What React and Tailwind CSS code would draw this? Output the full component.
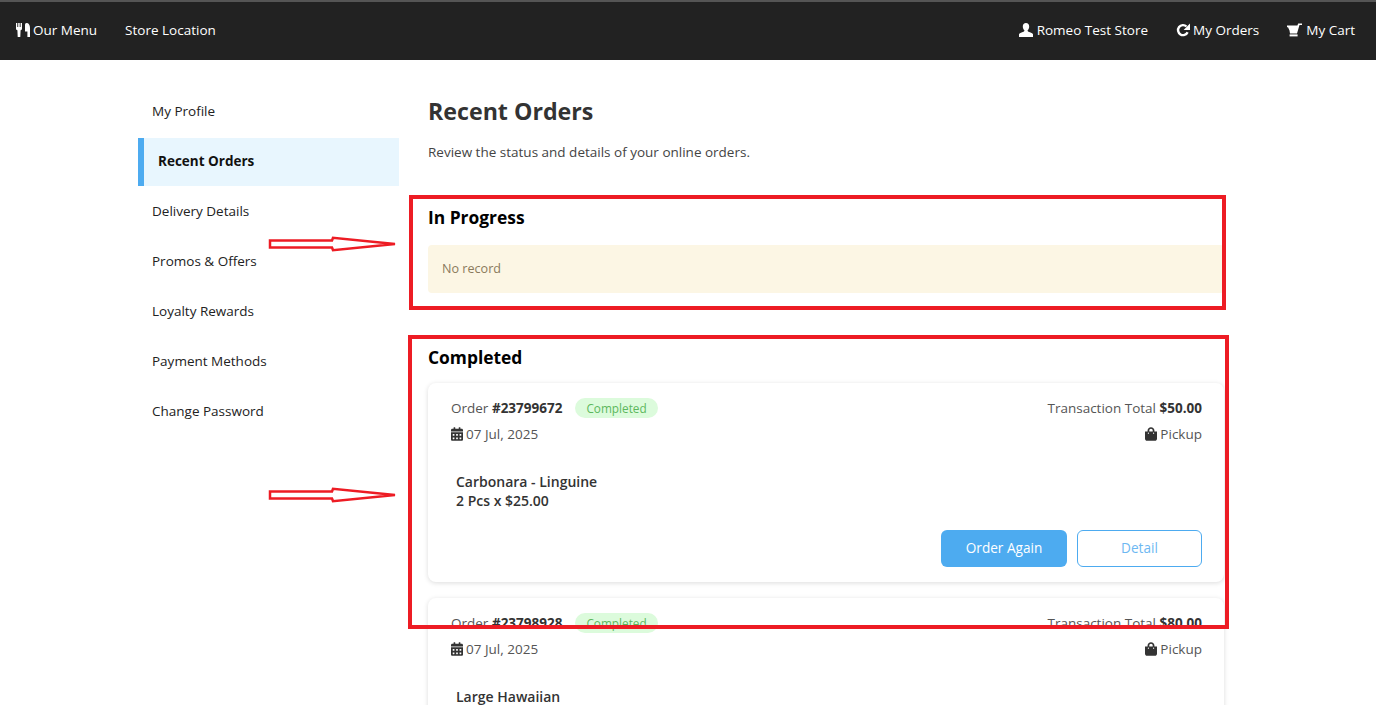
import { FaCalendarAlt, FaShoppingBag } from 'react-icons/fa';

const sideItems = ['My Profile', 'Recent Orders', 'Delivery Details', 'Promos & Offers', 'Loyalty Rewards', 'Payment Methods', 'Change Password'];

function Cutlery() {
  return (
    <svg viewBox="0 0 14 14" className="w-[14px] h-[14px] fill-white" aria-hidden="true">
      <path d="M0 0h1.300v4h.9V0h1.500v4h.9V0H6v5.500c0 1-.6 1.600-1.400 1.800L4.300 14H1.700L1.400 7.300C.6 7.100 0 6.500 0 5.500z" />
      <path d="M10.500 0C12.800 0 14 2 14 5v9h-2.600V8.500H9V2c0-1.300.5-2 1.500-2z" />
    </svg>
  );
}

function User() {
  return (
    <svg viewBox="0 0 14 14" className="w-[14px] h-[14px] fill-white" aria-hidden="true">
      <path d="M7 0c2 0 3.200 1.400 3.200 3.400 0 1.600-.7 3.200-1.700 4 .2.800.7 1.100 1.700 1.500 1.800.7 3.300 1.300 3.800 2.300V14H0v-2.800c.5-1 2-1.600 3.800-2.300 1-.4 1.500-.7 1.700-1.500-1-.8-1.700-2.400-1.700-4C3.800 1.400 5 0 7 0z" />
    </svg>
  );
}

function Refresh() {
  return (
    <svg viewBox="0 0 14 14" className="w-[14px] h-[14px] fill-none" aria-hidden="true">
      <path d="M11.600 9.200A5 5 0 1 1 10.500 3.500" stroke="white" strokeWidth="2.400" />
      <path d="M14 .6v6.400H7.600z" fill="white" />
    </svg>
  );
}

function Cart() {
  return (
    <svg viewBox="0 0 15 14" className="w-[15px] h-[14px] fill-white" aria-hidden="true">
      <path d="M0 2.400h10.400L11.200.4H15v1.700h-2.500L10 10.600H3L2.500 7.500 1 4.300H0z" />
      <rect x="2.600" y="11.400" width="8" height="2" />
    </svg>
  );
}

function Arrow({ className }) {
  return (
    <svg viewBox="0 0 130 16" className={`absolute w-[130px] h-[16px] ${className}`} aria-hidden="true">
      <path d="M2 4.500H64L65 1.800 127 8 65 14.200 64 11.500H2z" fill="white" stroke="#ed1c24" strokeWidth="2.500" />
    </svg>
  );
}

function OrderCard({ number, total, item, qty, withActions }) {
  return (
    <div className="rounded-lg bg-white pt-[14px] pb-[15px] pl-[23px] pr-[22px] shadow-[0_1px_5px_rgba(0,0,0,0.14)]">
      <div className="flex justify-between items-start text-[13.5px]">
        <div>
          <div className="flex items-center h-[22px]">
            <span className="text-[#555]">Order <b className="text-[#333]">#{number}</b></span>
            <span className="ml-[13px] rounded-full bg-[#dcfbdc] px-[11px] h-[20px] leading-[20px] text-[11.800px] text-[#5cb85c]">Completed</span>
          </div>
          <div className="flex items-center mt-[4px] h-[22px] text-[#555]">
            <FaCalendarAlt className="w-[12px] h-[14px] text-[#333] mr-[3px]" />
            07 Jul, 2025
          </div>
        </div>
        <div className="text-right text-[#555]">
          <div className="h-[22px] leading-[22px]">Transaction Total <b className="text-[#333]">${total}</b></div>
          <div className="flex items-center justify-end mt-[4px] h-[22px]">
            <FaShoppingBag className="w-[12px] h-[14px] text-[#333] mr-[3px]" />
            Pickup
          </div>
        </div>
      </div>
      <div className="mt-[27px] ml-[5px] font-semibold text-[#333] leading-[19px]">
        <div>{item}</div>
        <div>{qty}</div>
      </div>
      {withActions && (
        <div className="flex justify-end gap-[10px] mt-[20px] text-[13.6px]">
          <button className="w-[126px] h-[37px] rounded-md bg-[#4dabf0] text-white">Order Again</button>
          <button className="w-[125px] h-[37px] rounded-md border border-[#4dabf0] bg-white text-[#6db8f2]">Detail</button>
        </div>
      )}
    </div>
  );
}

export default function App() {
  return (
    <div className="relative h-[705px] overflow-hidden bg-white text-[14px] font-['Open_Sans',sans-serif]">
      <header className="flex justify-between items-center h-[60px] bg-[#222] border-t-2 border-[#555] text-white text-[13.5px] pl-[16px] pr-[21px] pb-[2px]">
        <nav className="flex items-center gap-[28px]">
          <a className="flex items-center gap-[3px]"><Cutlery />Our Menu</a>
          <a>Store Location</a>
        </nav>
        <nav className="flex items-center gap-[28px]">
          <a className="flex items-center gap-[4px]"><User />Romeo Test Store</a>
          <a className="flex items-center gap-[3px]"><Refresh />My Orders</a>
          <a className="flex items-center gap-[4px]"><Cart />My Cart</a>
        </nav>
      </header>

      <div className="flex pl-[138px] pr-[152px] pt-[27px]">
        <aside className="w-[261px] shrink-0 text-[13.5px]">
          {sideItems.map((label) =>
            label === 'Recent Orders' ? (
              <div key={label} className="flex items-center h-[48px] my-[1px] border-l-[6px] border-[#4dabf0] bg-[#e8f6fe] pl-[14px] pb-[1px] font-bold text-[#111]">
                {label}
              </div>
            ) : (
              <div key={label} className="flex items-center h-[50px] pl-[14px] pb-[1px] text-[#222]">{label}</div>
            )
          )}
        </aside>

        <main className="flex-1 ml-[29px] min-w-0">
          <h1 className="text-[23.200px] leading-[32px] font-bold text-[#333] mt-[8px]">Recent Orders</h1>
          <p className="mt-[15px] text-[13.5px] leading-[20px] text-[#444]">Review the status and details of your online orders.</p>

          <h2 className="mt-[43px] text-[17.400px] leading-[24px] font-bold text-black">In Progress</h2>
          <div className="mt-[16px] h-[48px] flex items-center rounded bg-[#fcf6e4] pl-[14px] text-[12.600px] text-[#8a7a5c]">No record</div>

          <h2 className="mt-[52px] text-[17.400px] leading-[24px] font-bold text-black">Completed</h2>
          <div className="mt-[14px] flex flex-col gap-[16px]">
            <OrderCard number="23799672" total="50.00" item="Carbonara - Linguine" qty="2 Pcs x $25.00" withActions />
            <OrderCard number="23798928" total="80.00" item="Large Hawaiian" qty="2 Pcs x $40.00" />
          </div>
        </main>
      </div>

      {/* annotations drawn over the page */}
      <div className="absolute left-[409px] top-[195px] w-[817px] h-[115px] border-[4px] border-[#ed1c24]" />
      <div className="absolute left-[408px] top-[335px] w-[821px] h-[294px] border-[4px] border-[#ed1c24]" />
      <Arrow className="left-[268px] top-[236px]" />
      <Arrow className="left-[268px] top-[487px]" />
    </div>
  );
}
